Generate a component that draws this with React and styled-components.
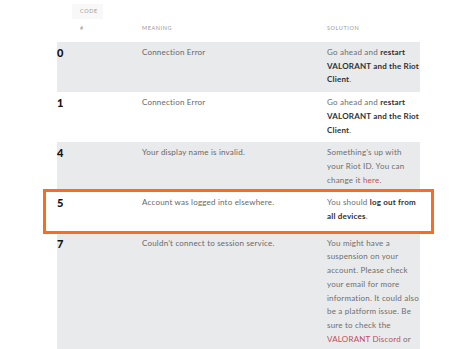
import styled, { createGlobalStyle } from "styled-components";

const GlobalStyle = createGlobalStyle`
  html, body {
    overflow: hidden;
  }
  body {
    margin: 0;
    background: #fff;
    font-family: Lato, "Open Sans", sans-serif;
    -webkit-font-smoothing: antialiased;
  }
`;

const errors = [
  {
    code: "0",
    meaning: "Connection Error",
    solution: (
      <>
        Go ahead and <b>restart VALORANT and the Riot Client</b>.
      </>
    ),
    shaded: true,
  },
  {
    code: "1",
    meaning: "Connection Error",
    solution: (
      <>
        Go ahead and <b>restart VALORANT and the Riot Client</b>.
      </>
    ),
  },
  {
    code: "4",
    meaning: "Your display name is invalid.",
    solution: (
      <>
        Something’s up with your Riot ID. You can change it{" "}
        <Link href="/#">here</Link>.
      </>
    ),
    shaded: true,
  },
  {
    code: "5",
    meaning: "Account was logged into elsewhere.",
    solution: (
      <>
        You should <b>log out from all devices</b>.
      </>
    ),
    highlight: true,
  },
  {
    code: "7",
    meaning: "Couldn’t connect to session service.",
    solution: (
      <>
        You might have a suspension on your account. Please check your email
        for more information. It could also be a platform issue. Be sure to
        check the <Link href="/#">VALORANT Discord</Link> or Riot Support
        Twitter.
      </>
    ),
    shaded: true,
  },
];

function Link({ href, children }) {
  return <RedLink href={href}>{children}</RedLink>;
}

const App = () => {
  return (
    <>
      <GlobalStyle />
      <Table>
        <HeadRow>
          <CodeHead>
            <CodeLabel>Code</CodeLabel>
            <HeadText>#</HeadText>
          </CodeHead>
          <HeadText>Meaning</HeadText>
          <HeadText>Solution</HeadText>
        </HeadRow>
        {errors.map((e) => (
          <Row key={e.code} $shaded={e.shaded} $highlight={e.highlight}>
            <Code>{e.code}</Code>
            <Meaning>{e.meaning}</Meaning>
            <Solution>{e.solution}</Solution>
          </Row>
        ))}
      </Table>
    </>
  );
};

const Table = styled.div`
  margin-left: 57px;
  width: 363px;
`;

const HeadRow = styled.div`
  display: grid;
  grid-template-columns: 85px 185px 93px;
  height: 42px;
  align-items: end;
  padding-bottom: 10px;
  box-sizing: border-box;
`;

const CodeHead = styled.div`
  display: flex;
  flex-direction: column;
  padding-left: 15px;
  gap: 6px;
`;

const HeadText = styled.span`
  font-size: 5.5px;
  letter-spacing: 0.6px;
  text-transform: uppercase;
  color: #9a9a9a;
  line-height: 7px;

  ${CodeHead} & {
    padding-left: 8px;
  }
`;

const CodeLabel = styled(HeadText)`
  background: #f8f8f8;
  width: 31px;
  padding: 4px 0 4px 8px;
  box-sizing: border-box;
`;

const Row = styled.div`
  display: grid;
  grid-template-columns: 85px 185px 93px;
  padding: 4px 0 ${(p) => (p.$highlight ? "9px" : "5px")};
  background: ${(p) => (p.$shaded ? "#e9eaec" : "#fff")};
  position: relative;

  ${(p) =>
    p.$highlight &&
    `
    &::after {
      content: "";
      position: absolute;
      z-index: 1;
      top: -3px;
      bottom: -1px;
      left: -14px;
      right: -14px;
      border: 3px solid #f86d1f;
    }
  `}
`;

const Code = styled.div`
  font-size: 11px;
  font-weight: 900;
  color: #111;
  line-height: 13.7px;
`;

const Meaning = styled.div`
  font-size: 8px;
  line-height: 13.7px;
  color: #686868;
  letter-spacing: 0.2px;
`;

const Solution = styled.div`
  font-size: 8px;
  line-height: 13.7px;
  color: #6e6e6e;
  letter-spacing: 0.2px;

  b {
    color: #303030;
    font-weight: 700;
  }
`;

const RedLink = styled.a`
  color: #c24d58;
  text-decoration: none;
`;

export default App;
